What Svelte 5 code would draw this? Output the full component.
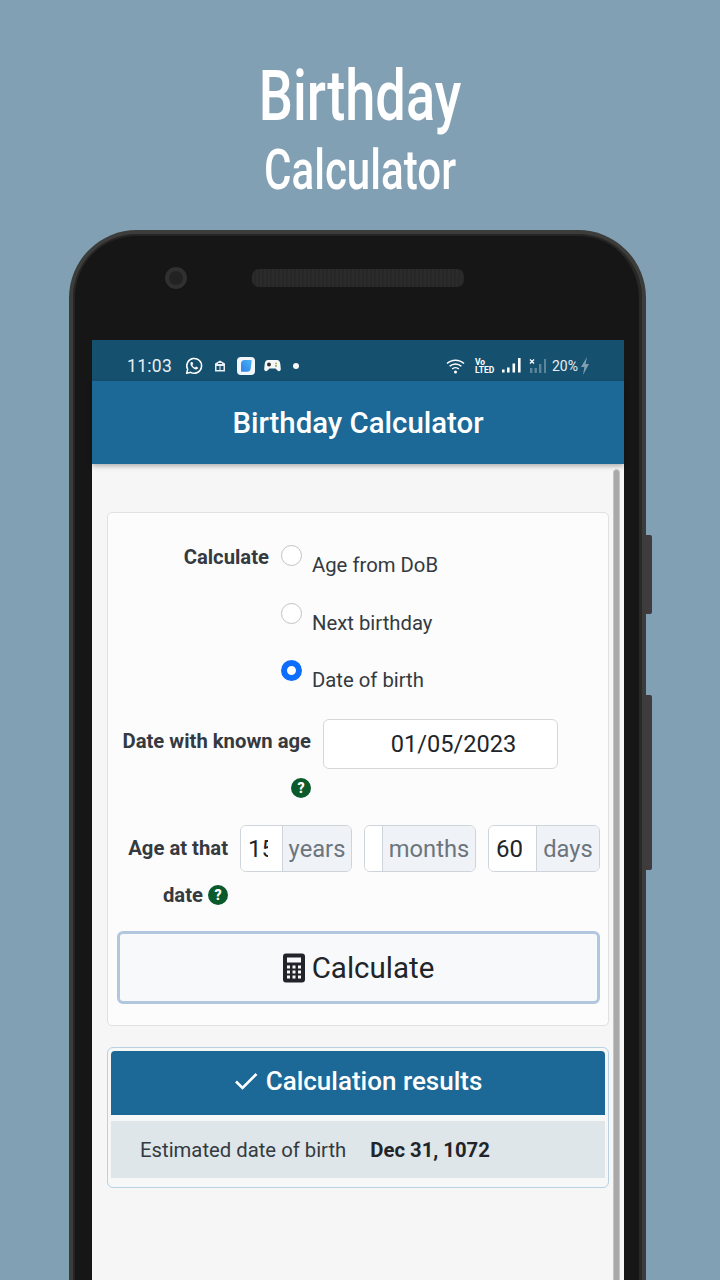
<script>
  const options = [
    { label: "Age from DoB", checked: false },
    { label: "Next birthday", checked: false },
    { label: "Date of birth", checked: true },
  ];

  const ageFields = [
    { value: "15", unit: "years", width: 42 },
    { value: "", unit: "months", width: 18 },
    { value: "60", unit: "days", width: 48 },
  ];
</script>

{#snippet help()}
  <span class="help">?</span>
{/snippet}

<div class="page">
  <header class="headline">
    <div class="line-one">Birthday</div>
    <div class="line-two">Calculator</div>
  </header>

  <div class="phone">
    <span class="side-key volume"></span>
    <span class="side-key power"></span>

    <div class="earpiece">
      <span class="camera"></span>
      <span class="speaker"></span>
    </div>

    <div class="screen">
      <div class="status-bar">
        <div class="status-left">
          <span class="clock">11:03</span>
          <svg class="ic-whatsapp" viewBox="0 0 18 18" width="18" height="18">
            <path d="M1.6 16.4l1.1-4A7.4 7.4 0 1 1 5.6 15.300z" fill="none" stroke="#fff" stroke-width="1.500" stroke-linejoin="round" />
            <path d="M6.300 5c-.9.5-1.100 1.700-.6 2.900.8 1.900 2.400 3.500 4.300 4.300 1.300.5 2.600.1 3-.9l-.1-.8-1.800-.9-1 1c-1.200-.4-2.300-1.500-2.800-2.700l.9-1-.8-1.900z" fill="#fff" />
          </svg>
          <svg class="ic-store" viewBox="0 0 12 12" width="12" height="12">
            <path d="M6 .5l5 3V11.500H1V3.500z" fill="#e8eef2" />
            <path d="M2.500 6h3v4h-3zM6.500 6h3v4h-3z" fill="#16506f" />
            <path d="M4 3.500h4" stroke="#16506f" stroke-width="1" />
          </svg>
          <svg class="ic-app" viewBox="0 0 18 18" width="18" height="18">
            <defs>
              <linearGradient id="leaf" x1="0" y1="1" x2="1" y2="0">
                <stop offset="0" stop-color="#2f7fe8" />
                <stop offset="1" stop-color="#4bb4f5" />
              </linearGradient>
            </defs>
            <rect width="18" height="18" rx="4" fill="#f2f7fb" />
            <path d="M4 6.500C4 4.500 5.500 3 7.500 3H14c.5 0 .8.300.7.800l-1 8c-.2 1.700-1.500 3-3.200 3H5c-.6 0-1-.4-1-1z" fill="url(#leaf)" />
          </svg>
          <svg class="ic-game" viewBox="0 0 17 14" width="17" height="14">
            <path d="M4 1h9c1.800 0 3 1.500 3.300 4l.5 5c.1 2-2 3-3.300 1.500L11.500 9.500h-6L3.500 11.500C2.200 13 .1 12 .2 10l.5-5C1 2.500 2.200 1 4 1z" fill="#f4f6f7" />
            <circle cx="5" cy="5.500" r="2" fill="#333" />
            <circle cx="12" cy="4.500" r="1" fill="#c9a84a" />
            <circle cx="12" cy="7" r="1" fill="#7fb069" />
          </svg>
          <span class="dot"></span>
        </div>

        <div class="status-right">
          <svg class="ic-wifi" viewBox="0 0 20 16" width="20" height="16">
            <path d="M1 5.500a12.500 12.500 0 0 1 17 0M3.600 8.300a8.700 8.700 0 0 1 11.800 0M6.200 11a4.800 4.800 0 0 1 6.600 0" fill="none" stroke="#fff" stroke-width="1.500" />
            <circle cx="9.500" cy="14" r="1.500" fill="#fff" />
          </svg>
          <span class="volte"><span>Vo</span><span>LTED</span></span>
          <svg class="ic-signal" viewBox="0 0 20 15" width="20" height="15">
            <path d="M1 11.500h2.600v3H1zM6 9.500h2.600v5H6zM11.500 5.500h2.600v9h-2.600zM17 0h2.600v14.500H17z" fill="#fff" />
          </svg>
          <svg class="ic-signal-off" viewBox="0 0 18 16" width="18" height="16">
            <path d="M1 1.500l4 4M5 1.500l-4 4" stroke="#fff" stroke-width="1.300" />
            <path d="M1 10h2.400v5H1zM5.500 10h2.400v5H5.500zM10 6h2.400v9H10zM15 1h2v14h-2z" fill="#fff" fill-opacity="0.3" />
          </svg>
          <span class="battery">20%</span>
          <svg class="ic-bolt" viewBox="0 0 10 18" width="10" height="18">
            <path d="M7 0L1 10h3.400L3 18l6-11H5.600z" fill="#fff" fill-opacity="0.45" />
          </svg>
        </div>
      </div>

      <div class="app-bar">Birthday Calculator</div>

      <main class="content">
        <span class="scrollbar"></span>

        <section class="card form">
          <div class="calc-row">
            <div class="calc-label">Calculate</div>
            <div class="options">
              {#each options as opt}
                <label class="option">
                  <input type="radio" name="mode" checked={opt.checked} />
                  <span>{opt.label}</span>
                </label>
              {/each}
            </div>
          </div>

          <div class="date-row">
            <div class="date-label">
              Date with known age
              <div class="date-help">{@render help()}</div>
            </div>
            <input class="date-input" type="text" value="01/05/2023" readonly />
          </div>

          <div class="age-row">
            <div class="age-label">
              Age at that
              <div class="age-label-two">date {@render help()}</div>
            </div>
            <div class="age-fields">
              {#each ageFields as field}
                <div class="input-group">
                  <input
                    type="text"
                    class:blank={!field.value}
                    value={field.value}
                    readonly
                    style:width={field.width + "px"}
                  />
                  <span class="unit">{field.unit}</span>
                </div>
              {/each}
            </div>
          </div>

          <button class="calc-button">
            <svg viewBox="0 0 22 29" width="22" height="30">
              <path fill-rule="evenodd" d="M3 0h16a3 3 0 0 1 3 3v23a3 3 0 0 1-3 3H3a3 3 0 0 1-3-3V3a3 3 0 0 1 3-3zM4 4v5h14V4zM4 12v3h3v-3zM9.500 12v3h3v-3zM15 12v3h3v-3zM4 17v3h3v-3zM9.500 17v3h3v-3zM15 17v3h3v-3zM4 22v3h3v-3zM9.500 22v3h3v-3zM15 22v3h3v-3z" fill="#212529" />
            </svg>
            Calculate
          </button>
        </section>

        <section class="card results">
          <div class="results-head">
            <svg viewBox="0 0 24 18" width="24" height="18">
              <path d="M2 9.500l6.500 6.500L22.500 2" fill="none" stroke="#fff" stroke-width="2.600" />
            </svg>
            Calculation results
          </div>
          <div class="results-row">
            <span class="results-key">Estimated date of birth</span>
            <strong>Dec 31, 1072</strong>
          </div>
        </section>
      </main>
    </div>
  </div>
</div>

<style>
  :global(body) {
    margin: 0;
    background: #82a0b4;
  }

  .page {
    height: 1280px;
    overflow: hidden;
    background: #82a0b4;
    font-family: Roboto, "Liberation Sans", sans-serif;
    color: #343a40;
  }

  .headline {
    height: 230px;
    padding-top: 56px;
    box-sizing: border-box;
    text-align: center;
    color: #fff;
    font-weight: 500;
  }
  .line-one {
    font-size: 71px;
    line-height: 80px;
    transform: scaleX(0.763);
  }
  .line-two {
    margin-top: 3px;
    font-size: 56px;
    line-height: 62px;
    transform: scaleX(0.752);
  }

  .phone {
    position: relative;
    width: 577px;
    height: 1150px;
    margin-left: 69px;
    box-sizing: border-box;
    padding-top: 106px;
    background: #161616;
    border: 4px solid #3c3c3a;
    border-bottom: 0;
    border-radius: 68px 68px 0 0;
    box-shadow: inset 0 2px 1px #262626, inset 2px 0 1px #262626, inset -3px 0 1px #2a2a28;
  }

  .side-key {
    position: absolute;
    left: 573px;
    width: 6px;
    background: #3f3b3e;
    border-radius: 0 2px 2px 0;
  }
  .volume {
    top: 301px;
    height: 79px;
  }
  .power {
    top: 461px;
    height: 175px;
  }

  .earpiece {
    position: absolute;
    top: 35px;
    left: 0;
    right: 0;
    height: 18px;
    display: flex;
    align-items: center;
  }
  .camera {
    margin-left: 92px;
    width: 22px;
    height: 22px;
    box-sizing: border-box;
    border-radius: 50%;
    background: #222;
    border: 4px solid #303030;
  }
  .speaker {
    margin-left: 65px;
    width: 212px;
    height: 18px;
    border-radius: 7px;
    background: repeating-linear-gradient(90deg, #2b2b2b 0 2px, #272727 2px 4px);
  }

  .screen {
    margin-left: 19px;
    width: 532px;
    height: 940px;
    background: #f6f6f6;
  }

  .status-bar {
    height: 41px;
    background: #16506f;
    display: flex;
    justify-content: space-between;
    align-items: center;
    padding: 10px 34px 0 35px;
    box-sizing: border-box;
    color: #e8eef2;
  }
  .status-left,
  .status-right {
    display: flex;
    align-items: center;
  }
  .clock {
    font-size: 17.500px;
    letter-spacing: 0.3px;
  }
  .ic-whatsapp {
    margin-left: 13px;
  }
  .ic-store {
    margin-left: 11px;
  }
  .ic-app {
    margin-left: 11px;
  }
  .ic-game {
    margin-left: 9px;
  }
  .dot {
    margin-left: 12px;
    width: 6px;
    height: 6px;
    border-radius: 50%;
    background: #f4f6f7;
  }
  .volte {
    margin-left: 9px;
    display: flex;
    flex-direction: column;
    font-size: 8.500px;
    line-height: 8px;
    font-weight: 700;
    width: 19px;
    color: #fff;
  }
  .ic-signal {
    margin-left: 7px;
  }
  .ic-signal-off {
    margin-left: 8px;
  }
  .battery {
    margin-left: 5px;
    font-size: 14px;
  }
  .ic-bolt {
    margin-left: 2px;
  }

  .app-bar {
    height: 83px;
    background: #1c6896;
    color: #fff;
    display: flex;
    align-items: center;
    justify-content: center;
    font-size: 29.400px;
    font-weight: 500;
    box-shadow: 0 2px 5px rgba(0, 0, 0, 0.3);
    position: relative;
  }

  .content {
    position: relative;
    padding: 48px 15px 0;
  }

  .scrollbar {
    position: absolute;
    top: 5px;
    right: 4px;
    width: 7px;
    height: 900px;
    background: #a9a9a9;
    border-radius: 4px 4px 0 0;
    box-sizing: border-box;
    border: 1px solid #c4c4c4;
  }

  .card {
    box-sizing: border-box;
    width: 502px;
    border-radius: 5px;
  }

  .form {
    height: 514px;
    background: #fcfcfc;
    border: 1px solid #dfe1e2;
    padding-top: 32px;
  }

  .calc-row {
    display: flex;
  }
  .calc-label {
    width: 161px;
    text-align: right;
    font-size: 20.250px;
    font-weight: 700;
    line-height: 24px;
  }
  .options {
    margin-left: 12px;
    display: flex;
    flex-direction: column;
    gap: 20.500px;
  }
  .option {
    display: flex;
    height: 37px;
    font-size: 20.300px;
    color: #343a40;
  }
  .option span {
    margin-left: 10px;
    margin-top: 6px;
    line-height: 28px;
  }
  .option input {
    appearance: none;
    margin: 0;
    width: 21px;
    height: 21px;
    box-sizing: border-box;
    border: 1.500px solid #bfc2c5;
    border-radius: 50%;
    background: #fff;
  }
  .option input:checked {
    border: 6px solid #0d6efd;
  }

  .date-row {
    display: flex;
    margin-top: 22px;
  }
  .date-label {
    width: 203px;
    text-align: right;
    font-size: 20.250px;
    font-weight: 700;
    line-height: 24px;
    padding-top: 10px;
  }
  .date-help {
    margin-top: 25px;
    height: 20px;
    display: flex;
    justify-content: flex-end;
  }
  .date-input {
    margin-left: 12px;
    width: 235px;
    height: 50px;
    box-sizing: border-box;
    border: 1.500px solid #d5d7da;
    border-radius: 6px;
    background: #fff;
    text-align: center;
    font-family: inherit;
    font-size: 23.600px;
    color: #212529;
    padding: 0 0 0 26px;
  }

  .help {
    display: inline-flex;
    vertical-align: 2px;
    align-items: center;
    justify-content: center;
    width: 20px;
    height: 20px;
    border-radius: 50%;
    background: #0b5a2b;
    color: #fff;
    font-size: 14px;
    font-weight: 900;
  }

  .age-row {
    display: flex;
    margin-top: 27px;
  }
  .age-label {
    width: 120px;
    text-align: right;
    font-size: 20.250px;
    font-weight: 700;
    line-height: 24px;
    padding-top: 11px;
  }
  .age-label-two {
    margin-top: 23px;
  }
  .age-fields {
    margin-left: 12px;
    display: flex;
    gap: 12px;
    align-items: flex-start;
  }
  .input-group {
    display: flex;
    width: 112px;
    height: 47px;
    box-sizing: border-box;
    border: 1.500px solid #ced4da;
    border-radius: 6px;
    overflow: hidden;
  }
  .input-group input {
    box-sizing: border-box;
    border: 0;
    border-right: 1.500px solid #ced4da;
    background: #fff;
    height: 100%;
    padding: 0 14px 0 7px;
    font-family: inherit;
    font-size: 24px;
    color: #212529;
    outline: 0;
  }
  .input-group input.blank {
    padding: 0;
  }
  .unit {
    flex: 1;
    background: #eff2f6;
    color: #6c757d;
    font-size: 23.700px;
    text-align: center;
    line-height: 46px;
  }

  .calc-button {
    display: flex;
    align-items: center;
    justify-content: center;
    gap: 7px;
    margin: 24px 0 0 9px;
    width: 483px;
    height: 73px;
    box-sizing: border-box;
    background: #f8f9fb;
    border: 3px solid #b2c6dd;
    border-radius: 6px;
    font-family: inherit;
    font-size: 29.500px;
    color: #212529;
    padding: 0;
  }

  .results {
    margin-top: 21px;
    height: 141px;
    padding: 3px;
    background: #f6f7f7;
    border: 1.500px solid #b8d2e0;
    border-radius: 6px;
  }
  .results-head {
    display: flex;
    align-items: center;
    justify-content: center;
    gap: 8px;
    height: 64px;
    background: #1c6896;
    border-radius: 4px 4px 0 0;
    color: #fff;
    font-size: 26px;
    font-weight: 500;
    padding-bottom: 5px;
    box-sizing: border-box;
  }
  .results-row {
    margin-top: 6px;
    height: 57px;
    background: #dee6e9;
    display: flex;
    align-items: center;
    padding-left: 29px;
    font-size: 20.300px;
    color: #343a40;
  }
  .results-row strong {
    margin-left: 24px;
    color: #212529;
  }
</style>
